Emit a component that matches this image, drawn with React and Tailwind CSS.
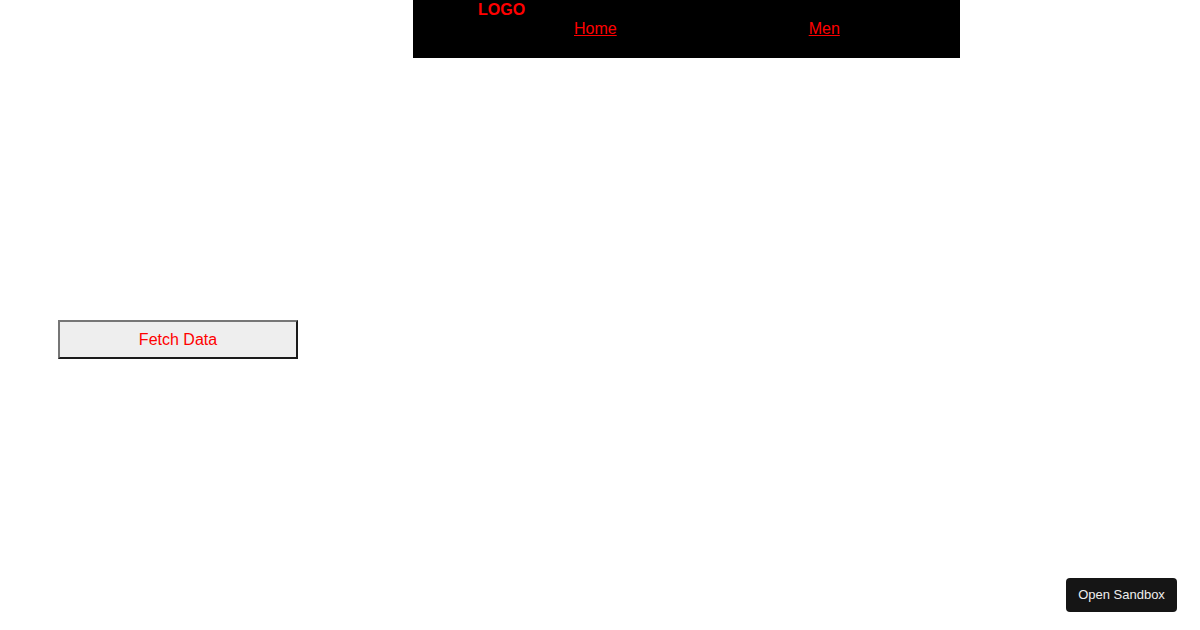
import React from 'react';

const App = () => {
  return (
    <div className="relative min-h-[630px] bg-white font-['Liberation_Sans',Arial,sans-serif] text-base">
      {/* header */}
      <header className="ml-[413px] w-[547px] h-[58px] bg-black">
        <div className="pt-[1px] pl-[65px] leading-[18px] font-bold text-[#ff0000]">LOGO</div>
        <nav className="flex mt-[1px] leading-[18px]">
          <a href="#" className="ml-[161px] text-[#ff0000] underline">Home</a>
          <a href="#" className="ml-[192px] text-[#ff0000] underline">Men</a>
        </nav>
      </header>

      <div className="pt-[262px] pl-[58px]">
        <button className="w-[240px] h-[39px] bg-[#eeeeee] text-[#ff0000] border-2 border-t-[#767676] border-l-[#767676] border-r-[#1a1a1a] border-b-[#1a1a1a]">
          Fetch Data
        </button>
      </div>

      <button className="fixed right-[23px] bottom-[18px] w-[111px] h-[34px] rounded-[4px] bg-[#151515] text-[13px] text-[#eeeeee]">
        Open Sandbox
      </button>
    </div>
  );
};

export default App;
